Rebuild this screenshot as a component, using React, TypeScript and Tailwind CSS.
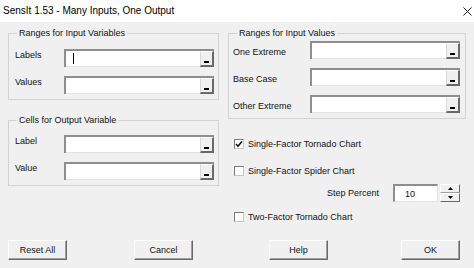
import React from "react";

function RefField({ cursor }: { cursor?: boolean }) {
  return (
    <div className="flex h-[18px] w-[150px] border-t-2 border-l-2 border-t-[#8e8e8e] border-l-[#8e8e8e] bg-white">
      <div className="flex flex-1 items-center border-b border-b-[#e3e3e3] bg-white">
        {cursor && <span className="ml-[7px] h-[11px] w-px bg-black" />}
      </div>
      <div className="flex w-[14px] items-end justify-center border-b-2 border-r-2 border-l border-t border-b-[#696969] border-r-[#696969] border-l-[#d8d8d8] border-t-white bg-[#f0f0f0] pb-[2px]">
        <span className="h-[2px] w-[5px] bg-black" />
      </div>
    </div>
  );
}

function Row({ label, cursor, side }: { label: string; cursor?: boolean; side: "l" | "r" }) {
  return (
    <div className="flex h-[18px] items-center justify-between">
      <span className={side === "l" ? "mb-[6px]" : "mt-[4px]"}>{label}</span>
      <RefField cursor={cursor} />
    </div>
  );
}

function CheckBox({ checked }: { checked?: boolean }) {
  return (
    <span className="flex h-[10px] w-[10px] items-center justify-center border border-t-[#7a7a7a] border-l-[#7a7a7a] border-r-[#c8c8c8] border-b-[#c8c8c8] bg-white">
      {checked && (
        <svg width="8" height="8" viewBox="0 0 8 8">
          <path d="M1 4 L3 6.2 L7 1.5" fill="none" stroke="#000" strokeWidth="1.5" />
        </svg>
      )}
    </span>
  );
}

function CheckRow({ label, checked, className }: { label: string; checked?: boolean; className: string }) {
  return (
    <div className={"flex h-[13px] items-center pl-[6px] " + className}>
      <CheckBox checked={checked} />
      <span className="ml-[4px]">{label}</span>
    </div>
  );
}

function Btn({ label, className }: { label: string; className?: string }) {
  return (
    <div
      className={
        "flex h-[20px] w-[59px] items-center justify-center border-t border-l border-r border-b border-t-white border-l-white border-r-[#696969] border-b-[#696969] bg-[#f0f0f0] shadow-[inset_-1px_-1px_0_#a0a0a0] " +
        (className ?? "")
      }
    >
      {label}
    </div>
  );
}

export default function App() {
  return (
    <div className="flex h-[268px] w-[474px] flex-col bg-[#f0f0f0] font-['Liberation_Sans',Arial,sans-serif] text-[9px] leading-[12px] text-[#111]">
      <div className="flex h-[22px] items-center justify-between bg-white pl-[3px] pr-[1px]">
        <span className="text-[10px] text-black">SensIt 1.53 - Many Inputs, One Output</span>
        <svg width="9" height="9" viewBox="0 0 9 9" className="mr-[1px]">
          <path d="M0.5 0.5 L8.5 8.5 M8.5 0.5 L0.5 8.5" stroke="#222" strokeWidth="1" />
        </svg>
      </div>
      <div className="flex flex-1 flex-col px-[8px] pt-[5px] pb-[8px]">
        <div className="flex">
          <div className="flex w-[211px] flex-col">
            <fieldset className="border border-[#d3d3d3] pt-[10px] pr-[4px] pb-[5px] pl-[6px]">
              <legend className="ml-[2px] px-[2px] leading-[12px]">Ranges for Input Variables</legend>
              <div className="flex flex-col gap-[9px]">
                <Row label="Labels" cursor side="l" />
                <Row label="Values" side="l" />
              </div>
            </fieldset>
            <fieldset className="mt-[14px] border border-[#d3d3d3] pt-[9px] pr-[4px] pb-[5px] pl-[6px]">
              <legend className="ml-[2px] px-[2px] leading-[12px]">Cells for Output Variable</legend>
              <div className="flex flex-col gap-[9px]">
                <Row label="Label" side="l" />
                <Row label="Value" side="l" />
              </div>
            </fieldset>
          </div>
          <div className="ml-[9px] flex w-[238px] flex-col">
            <fieldset className="border border-[#d3d3d3] pt-[2px] pr-[5px] pb-[5px] pl-[4px]">
              <legend className="ml-[4px] px-[2px] leading-[12px]">Ranges for Input Values</legend>
              <div className="flex flex-col gap-[9px]">
                <Row label="One Extreme" side="r" />
                <Row label="Base Case" side="r" />
                <Row label="Other Extreme" side="r" />
              </div>
            </fieldset>
            <CheckRow label="Single-Factor Tornado Chart" checked className="mt-[18px]" />
            <CheckRow label="Single-Factor Spider Chart" className="mt-[14px]" />
            <div className="mt-[7px] flex h-[18px] items-center justify-end pr-[6px]">
              <span>Step Percent</span>
              <div className="ml-[14px] flex h-[18px] w-[45px] items-center border-t-2 border-l-2 border-t-[#8e8e8e] border-l-[#8e8e8e] border-b border-r border-b-[#e3e3e3] border-r-[#e3e3e3] bg-white pl-[10px]">
                10
              </div>
              <div className="ml-[2px] flex h-[18px] w-[20px] flex-col">
                <div className="flex h-[9px] items-center justify-center border-t border-l border-r border-b border-t-white border-l-white border-r-[#696969] border-b-[#a0a0a0] bg-[#f0f0f0]">
                  <svg width="5" height="3" viewBox="0 0 5 3">
                    <path d="M2.5 0 L5 3 L0 3 Z" fill="#000" />
                  </svg>
                </div>
                <div className="flex h-[9px] items-center justify-center border-t border-l border-r border-b border-t-white border-l-white border-r-[#696969] border-b-[#696969] bg-[#f0f0f0]">
                  <svg width="5" height="3" viewBox="0 0 5 3">
                    <path d="M0 0 L5 0 L2.5 3 Z" fill="#000" />
                  </svg>
                </div>
              </div>
            </div>
            <CheckRow label="Two-Factor Tornado Chart" className="mt-[8px]" />
          </div>
        </div>
        <div className="mt-auto flex">
          <Btn label="Reset All" />
          <Btn label="Cancel" className="ml-[67px]" />
          <Btn label="Help" className="ml-[76px]" />
          <Btn label="OK" className="ml-[73px]" />
        </div>
      </div>
    </div>
  );
}
